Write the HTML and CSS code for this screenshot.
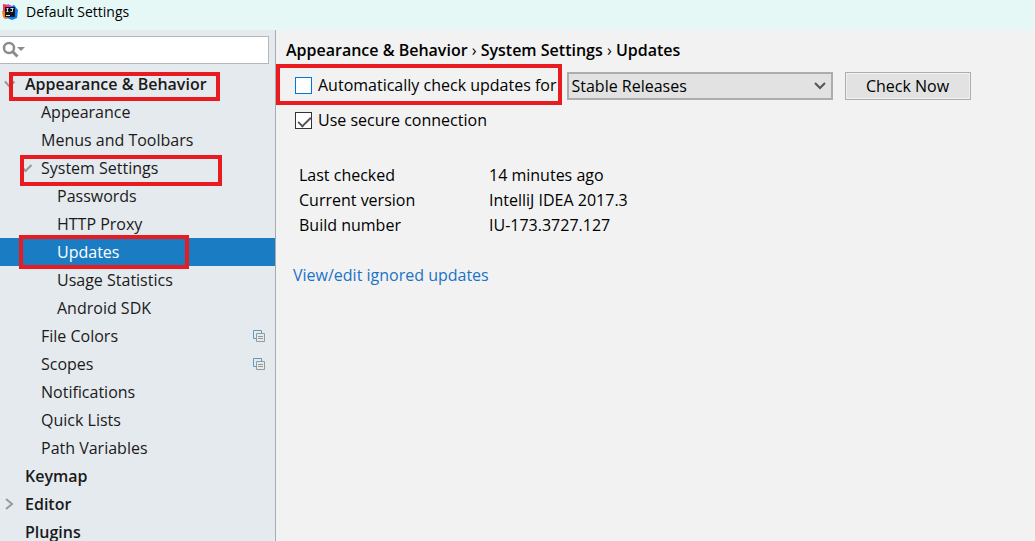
FILE: index.html
```html
<!DOCTYPE html>
<html lang="en">
<head>
    <meta charset="UTF-8">
    <title>Default Settings</title>
    <link rel="stylesheet" href="styles.css">
</head>
<body>
<header class="titlebar">
    <svg class="logo" viewBox="0 0 16 16">
        <path fill="#fe315d" d="M1 0l6 1 2 5-3 7-3 2-2-3z"/>
        <path fill="#f97a12" d="M0 7l5 1 2 6-3 1-3-2z"/>
        <path fill="#087cfa" d="M8 3l4-2 4 5-1 8-5 2-5-2z"/>
        <path fill="#b74af7" d="M6 0l4 2v4L4 5z"/>
        <path fill="#141414" d="M3 3h10v10H3z"/>
        <path fill="none" stroke="#ddd" d="M4.500 4.500h2M5.500 4v4M4.500 7.500h2M8.500 4.500h3M10.500 4v3.500h-2M4 11.500h4"/>
    </svg>
    <span>Default Settings</span>
</header>
<div class="window">
    <aside class="sidebar">
        <div class="search">
            <svg class="search-icon" viewBox="0 0 24 18">
                <circle cx="7" cy="7" r="5" fill="none" stroke="#8c8c8c" stroke-width="2.500"/>
                <path d="M10.500 10.500l5 5" stroke="#8c8c8c" stroke-width="3"/>
                <path d="M15 6h8l-4 4z" fill="#8c8c8c"/>
            </svg>
            <input type="text" aria-label="Search settings">
        </div>
        <ul class="tree">
            <li>
                <div class="row bold">
                    <svg class="arrow" viewBox="0 0 12 12"><path d="M1 3.500l4.500 5 5-5"/></svg>
                    <span>Appearance &amp; Behavior</span>
                    <i class="mark mark-appearance"></i>
                </div>
                <ul>
                    <li><div class="row">Appearance</div></li>
                    <li><div class="row">Menus and Toolbars</div></li>
                    <li>
                        <div class="row">
                            <svg class="arrow" viewBox="0 0 12 12"><path d="M2 5l3.500 4 6-6"/></svg>
                            <span>System Settings</span>
                            <i class="mark mark-system"></i>
                        </div>
                        <ul>
                            <li><div class="row">Passwords</div></li>
                            <li><div class="row">HTTP Proxy</div></li>
                            <li><div class="row selected">Updates<i class="mark mark-updates"></i></div></li>
                            <li><div class="row">Usage Statistics</div></li>
                            <li><div class="row">Android SDK</div></li>
                        </ul>
                    </li>
                    <li>
                        <div class="row">
                            <span>File Colors</span>
                            <svg class="copy" viewBox="0 0 12 12">
                                <path d="M3 8.500H.5v-8h8V3" stroke="#5b9bc0"/>
                                <path d="M3.500 3.500h8v8h-8z" stroke="#999"/>
                                <path d="M5 6.500h5M5 8.500h5" stroke="#999"/>
                            </svg>
                        </div>
                    </li>
                    <li>
                        <div class="row">
                            <span>Scopes</span>
                            <svg class="copy" viewBox="0 0 12 12">
                                <path d="M3 8.500H.5v-8h8V3" stroke="#5b9bc0"/>
                                <path d="M3.500 3.500h8v8h-8z" stroke="#999"/>
                                <path d="M5 6.500h5M5 8.500h5" stroke="#999"/>
                            </svg>
                        </div>
                    </li>
                    <li><div class="row">Notifications</div></li>
                    <li><div class="row">Quick Lists</div></li>
                    <li><div class="row">Path Variables</div></li>
                </ul>
            </li>
            <li><div class="row bold">Keymap</div></li>
            <li>
                <div class="row bold">
                    <svg class="arrow" viewBox="0 0 12 12"><path d="M2 1l6 5-6 5"/></svg>
                    <span>Editor</span>
                </div>
            </li>
            <li><div class="row bold">Plugins</div></li>
        </ul>
    </aside>
    <main class="content">
        <h1 class="crumbs">Appearance &amp; Behavior <span>›</span> System Settings <span>›</span> Updates</h1>
        <div class="line">
            <label class="check">
                <input type="checkbox" class="hot">
                <span>Automatically check updates for</span>
                <i class="mark mark-check"></i>
            </label>
            <div class="select">
                <select aria-label="Update channel">
                    <option>Stable Releases</option>
                    <option>Early Access Program</option>
                </select>
                <svg class="select-arrow" viewBox="0 0 12 8"><path d="M1 1l5 5 5-5"/></svg>
            </div>
            <button type="button" class="btn">Check Now</button>
        </div>
        <div class="line secure">
            <label class="check">
                <input type="checkbox" checked>
                <span>Use secure connection</span>
            </label>
        </div>
        <table class="info">
            <tr><th scope="row">Last checked</th><td>14 minutes ago</td></tr>
            <tr><th scope="row">Current version</th><td>IntelliJ IDEA 2017.3</td></tr>
            <tr><th scope="row">Build number</th><td>IU-173.3727.127</td></tr>
        </table>
        <a class="link" href="#">View/edit ignored updates</a>
    </main>
</div>
</body>
</html>
```
FILE: styles.css
```css
* {
    box-sizing: border-box;
}
body {
    margin: 0;
    height: 100vh;
    display: flex;
    flex-direction: column;
    overflow: hidden;
    background: #f2f2f2;
    color: #000;
    font: 16px/28px "Open Sans", "Noto Sans", sans-serif;
}
svg {
    flex: none;
}
.titlebar {
    display: flex;
    flex: none;
    align-items: center;
    gap: 8px;
    height: 30px;
    padding: 0 2px 7px;
    background: #e5f8f6;
    font-size: 14px;
}
.logo {
    width: 16px;
    height: 16px;
}
.window {
    display: flex;
    flex: 1;
    min-height: 0;
}

/* left side */
.sidebar {
    flex: none;
    width: 276px;
    padding-top: 6px;
    overflow: hidden;
    background: #e5eaef;
    border-right: 1px solid #a9acae;
    color: #1a1a1a;
}
.search {
    display: flex;
    align-items: center;
    height: 28px;
    margin: 0 6px 6px 0;
    padding-left: 2px;
    background: #fff;
    border: 1px solid #b4b8bc;
    border-left: 0;
}
.search-icon {
    width: 24px;
    height: 18px;
}
.search input {
    flex: 1;
    min-width: 0;
    border: 0;
    outline: none;
    background: none;
    font: inherit;
}
.tree, .tree ul {
    margin: 0;
    padding: 0;
    list-style: none;
}
.row {
    position: relative;
    display: flex;
    align-items: center;
    height: 28px;
    padding-bottom: 1px;
    padding-left: 25px;
    line-height: 24px;
}
.tree ul .row {
    padding-left: 41px;
}
.tree ul ul .row {
    padding-left: 57px;
}
.bold {
    font-weight: 600;
}
.row.selected {
    background: #1a7dc4;
    color: #fff;
}
.arrow {
    width: 12px;
    height: 12px;
    margin-left: -21px;
    margin-right: 9px;
    fill: none;
    stroke: #999;
    stroke-width: 2;
}
.copy {
    width: 12px;
    height: 12px;
    margin-left: auto;
    margin-right: 10px;
    fill: none;
}

/* red frames over the settings */
.mark {
    position: absolute;
    z-index: 1;
    border: 4px solid #e81c20;
    pointer-events: none;
}
.mark-appearance {
    left: 9px;
    top: 2px;
    width: 211px;
    height: 29px;
}
.mark-system {
    left: 20px;
    top: 1px;
    width: 202px;
    height: 31px;
}
.mark-updates {
    left: 19px;
    top: -3px;
    width: 170px;
    height: 34px;
}
.mark-check {
    left: -19px;
    right: -5px;
    top: -8px;
    height: 41px;
}

/* right side */
.content {
    flex: 1;
    min-width: 0;
    padding: 6px 10px;
}
.crumbs {
    margin: 0 0 8px;
    font-size: 16px;
    font-weight: 600;
    line-height: 28px;
}
.crumbs span {
    font-weight: normal;
}
.line {
    display: flex;
    align-items: flex-start;
    height: 28px;
    padding-left: 9px;
}
.check {
    position: relative;
    display: flex;
    align-items: center;
    gap: 6px;
    height: 26px;
    line-height: 26px;
    white-space: nowrap;
}
.check input {
    appearance: none;
    flex: none;
    width: 17px;
    height: 17px;
    margin: 0;
    background: #fff;
    border: 1px solid #333;
}
.check .hot {
    border-color: #0078d7;
}
.check input:checked::after {
    content: "";
    display: block;
    width: 11px;
    height: 5px;
    margin: 4px 2px;
    border: solid #555;
    border-width: 0 0 2px 2px;
    transform: rotate(-45deg);
}
.select {
    position: relative;
    flex: 0 1 266px;
    margin: 0 12px 0 10px;
}
.select select {
    appearance: none;
    display: block;
    width: 100%;
    height: 28px;
    padding: 0 24px 0 3px;
    background: #e2e2e2;
    border: 2px solid #adadad;
    border-radius: 0;
    color: #000;
    font: inherit;
    line-height: 24px;
}
.select-arrow {
    position: absolute;
    right: 7px;
    top: 10px;
    width: 12px;
    height: 8px;
    fill: none;
    stroke: #555;
    stroke-width: 2;
    pointer-events: none;
}
.btn {
    flex: none;
    width: 126px;
    height: 28px;
    padding: 0;
    background: #e2e2e2;
    border: 1px solid #adadad;
    box-shadow: inset 0 0 0 1px #f1f1f1;
    color: #000;
    font: inherit;
    line-height: 24px;
}
.secure {
    margin-top: 7px;
}
.info {
    margin: 28px 0 23px 13px;
    border-collapse: collapse;
    line-height: 25px;
}
.info th, .info td {
    padding: 0;
    font-weight: normal;
    text-align: left;
}
.info th {
    width: 190px;
}
.link {
    margin-left: 7px;
    color: #1a73c8;
    text-decoration: none;
}
```
